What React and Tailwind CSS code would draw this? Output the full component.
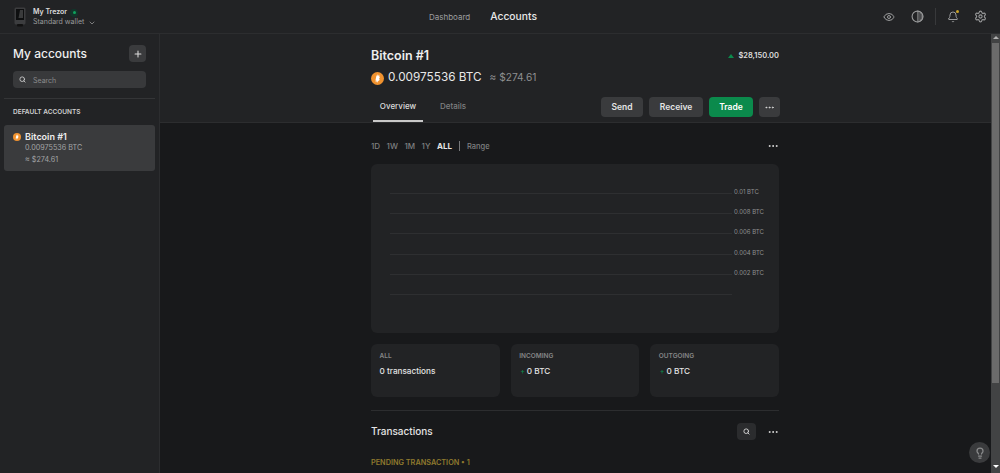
import React from 'react';
import { Search, Plus, ChevronDown, Eye, Bell, Settings, Lightbulb, MoreHorizontal } from 'lucide-react';

const font = { fontFamily: 'Inter, "Liberation Sans", sans-serif' };

const BtcIcon = ({ size = 9, className = '' }) => (
  <svg width={size} height={size} viewBox="0 0 24 24" className={`shrink-0 ${className}`}>
    <circle cx="12" cy="12" r="12" fill="#f0922f" />
    <g transform="rotate(12 12 12)">
      <path d="M9 7h4c1.700 0 2.700.9 2.700 2.300 0 1-.5 1.700-1.300 2 1.100.3 1.800 1.100 1.800 2.300 0 1.700-1.200 2.700-3.100 2.700H9z" fill="#fff" />
      <path d="M10.800 7V5 M13.300 7V5 M10.800 16.500V19 M13.300 16.500V19" stroke="#fff" strokeWidth="1.400" />
    </g>
  </svg>
);

const Sidebar = () => (
  <aside className="w-[160px] shrink-0 bg-[#222325] border-r border-[#2c2d2f]">
    <div className="flex items-center justify-between px-[13px] pt-[11px]">
      <span className="text-[12px] leading-[17px] font-medium text-[#eeeeee]">My accounts</span>
      <button className="w-[17px] h-[17px] rounded-[4px] bg-[#3a3b3d] flex items-center justify-center text-[#dddddd]">
        <Plus size={10} strokeWidth={2.5} />
      </button>
    </div>
    <div className="mx-[13px] mt-[9px] h-[17px] rounded-[4px] bg-[#38393b] flex items-center pl-[6px] gap-[7px]">
      <Search size={7} strokeWidth={3} className="text-[#cccccc]" />
      <span className="text-[7px] leading-[17px] pt-[1px] text-[#8a8b8c]">Search</span>
    </div>
    <div className="mx-1 mt-[10px] border-t border-[#343537]" />
    <div className="pl-[13px] pt-[8px] text-[6.500px] leading-[10px] font-semibold text-[#d0d0d0]">DEFAULT ACCOUNTS</div>
    <div className="mx-1 mt-[8px] h-[46px] rounded-[3px] bg-[#3a3b3d] pl-[9px] pt-[6px]">
      <div className="flex items-center gap-[4px]">
        <BtcIcon size={8} />
        <span className="text-[9px] leading-[11px] font-semibold text-[#eeeeee]">Bitcoin #1</span>
      </div>
      <div className="pl-[12px] text-[7.200px] leading-[12px] text-[#a3a4a5]">0.00975536 BTC</div>
      <div className="pl-[12px] text-[7.200px] leading-[12px] text-[#a3a4a5]">≈ $274.61</div>
    </div>
  </aside>
);

const Chart = () => (
  <div className="mt-[12px] h-[169px] rounded-[6px] bg-[#222325] pt-[19px] pl-[19px] pr-[15px]">
    {['0.01 BTC', '0.008 BTC', '0.006 BTC', '0.004 BTC', '0.002 BTC', ''].map((label, i) => (
      <div key={i} className="h-[20.300px] flex items-center">
        <div className="w-[342px] border-t border-[#2e2f31]" />
        <span className="ml-[2px] -translate-y-[2px] text-[6px] text-[#8e8f90] whitespace-nowrap">{label}</span>
      </div>
    ))}
  </div>
);

const StatCard = ({ title, value, plus }) => (
  <div className="flex-1 h-[53px] rounded-[6px] bg-[#222325] pl-[8.500px] pt-[8px]">
    <div className="text-[6.500px] leading-[9px] font-semibold text-[#858687]">{title}</div>
    <div className="mt-[4px] text-[8.200px] leading-[12px] font-medium text-[#e4e4e4]">
      {plus && <span className="text-[#0b8a4c] ml-[1px] mr-[2px] text-[7px]">+</span>}
      {value}
    </div>
  </div>
);

export default function App() {
  return (
    <div style={font} className="h-[473px] w-[1000px] overflow-hidden flex flex-col bg-[#18191b] relative">
      <header className="h-[34px] shrink-0 bg-[#222325] border-b border-[#2c2d2f] flex items-center pl-[14px] pr-[13px] relative">
        <svg width="12" height="20" viewBox="0 0 12 20" className="shrink-0">
          <rect x="0.500" y="0.500" width="11" height="17" rx="1.500" fill="#3c3d3f" />
          <rect x="2" y="2" width="8" height="11" fill="#0e0f10" />
          <path d="M6 3h3v8H4.500z" fill="#3a3b3c" />
          <rect x="3" y="17" width="6" height="2.500" rx="1" fill="#111" />
        </svg>
        <div className="ml-[7px] mt-[2px]">
          <div className="flex items-center gap-[3px] h-[10px]">
            <span className="text-[7px] font-semibold text-[#dcdcdc]">My Trezor</span>
            <span className="w-[8px] h-[8px] rounded-full bg-[#12352a] flex items-center justify-center">
              <span className="w-[3px] h-[3px] rounded-full bg-[#0fa35d]" />
            </span>
          </div>
          <div className="flex items-center gap-[4px] h-[10px]">
            <span className="text-[7px] text-[#99999a]">Standard wallet</span>
            <ChevronDown size={8} className="text-[#aaaaaa]" />
          </div>
        </div>
        <nav className="absolute left-[429px] top-0 h-[33px] flex items-center gap-[20px]">
          <span className="text-[8px] text-[#9d9e9f]">Dashboard</span>
          <span className="text-[10.300px] font-medium text-[#e8e8e8]">Accounts</span>
        </nav>
        <div className="ml-auto flex items-center text-[#9a9b9c]">
          <Eye size={12} />
          <svg width="13" height="13" viewBox="0 0 24 24" className="ml-[16px]" fill="none" stroke="currentColor" strokeWidth="2">
            <circle cx="12" cy="12" r="10" />
            <path d="M12 2a10 10 0 0 1 0 20z" fill="currentColor" opacity="0.6" />
            <path d="M15 4v16M18 7v10" stroke="#222325" strokeWidth="1.200" />
          </svg>
          <div className="ml-[11px] h-[17px] border-l border-[#38393b]" />
          <div className="relative ml-[11px]">
            <Bell size={12} />
            <span className="absolute -top-[1px] right-0 w-[3px] h-[3px] rounded-full bg-[#c9a227]" />
          </div>
          <Settings size={13} className="ml-[15px]" />
        </div>
      </header>

      <div className="flex-1 flex min-h-0">
        <Sidebar />
        <main className="flex-1 min-w-0">
          <div className="h-[89px] bg-[#222325] border-b border-[#2c2d2f]">
            <div className="w-[408px] ml-[211px] pt-[13px]">
              <div className="flex items-center justify-between h-[18px]">
                <span className="text-[12.500px] font-semibold text-[#eeeeee]">Bitcoin #1</span>
                <span className="flex items-center gap-[4px] text-[7.500px] font-semibold text-[#dddddd]">
                  <span className="w-0 h-0 border-l-[3px] border-r-[3px] border-b-[4px] border-l-transparent border-r-transparent border-b-[#0b8a4c]" />
                  $28,150.00
                </span>
              </div>
              <div className="mt-[6px] flex items-center h-[14px]">
                <BtcIcon size={13} />
                <span className="ml-[4px] text-[11.750px] text-[#e8e8e8]">0.00975536 BTC</span>
                <span className="ml-[8px] text-[10.200px] text-[#8e8f90]">≈ $274.61</span>
              </div>
              <div className="mt-[6px] flex justify-between h-[31px]">
                <div className="flex">
                  <div className="w-[50px] h-[31px] flex justify-center pt-[9px] border-b-2 border-[#c8c8c8] text-[8px] leading-[12px] font-medium text-[#dcdcdc] ml-[2px]">Overview</div>
                  <div className="ml-[17px] pt-[9px] text-[8px] leading-[12px] font-medium text-[#7f8081]">Details</div>
                </div>
                <div className="flex gap-[6px] h-[20px] mt-[6px] mr-[-1px]">
                  <button className="w-[42px] rounded-[4px] bg-[#3a3b3d] text-[8.500px] font-semibold text-[#e4e4e4]">Send</button>
                  <button className="w-[54px] rounded-[4px] bg-[#3a3b3d] text-[8.500px] font-semibold text-[#e4e4e4]">Receive</button>
                  <button className="w-[44px] rounded-[4px] bg-[#0b8a4c] text-[8.500px] font-semibold text-[#ffffff]">Trade</button>
                  <button className="w-[21px] rounded-[4px] bg-[#3a3b3d] flex items-center justify-center text-[#dddddd]">
                    <MoreHorizontal size={11} />
                  </button>
                </div>
              </div>
            </div>
          </div>

          <div className="w-[408px] ml-[211px]">
            <div className="mt-[17px] h-[12px] flex items-center text-[8px] font-medium text-[#7f8081]">
              <span>1D</span>
              <span className="ml-[6.500px]">1W</span>
              <span className="ml-[6.500px]">1M</span>
              <span className="ml-[6.500px]">1Y</span>
              <span className="ml-[6.500px] font-bold text-[#e4e4e4]">ALL</span>
              <span className="ml-[7px] h-[10px] border-l border-[#77787a]" />
              <span className="ml-[7px] pt-[1px] text-[7.500px]">Range</span>
              <MoreHorizontal size={12} className="ml-auto text-[#dddddd]" />
            </div>
            <Chart />
            <div className="mt-[11px] flex gap-[11px]">
              <StatCard title="ALL" value="0 transactions" />
              <StatCard title="INCOMING" value="0 BTC" plus />
              <StatCard title="OUTGOING" value="0 BTC" plus />
            </div>
            <div className="mt-[13px] border-t border-[#2c2d2f]" />
            <div className="mt-[12px] flex items-center h-[17px]">
              <span className="text-[10px] font-medium text-[#e4e4e4]">Transactions</span>
              <button className="ml-auto w-[19px] h-[17px] rounded-[4px] bg-[#2b2c2e] flex items-center justify-center text-[#dddddd]">
                <Search size={7} strokeWidth={3} />
              </button>
              <MoreHorizontal size={12} className="ml-[11px] text-[#dddddd]" />
            </div>
            <div className="mt-[18px] text-[7.300px] font-semibold text-[#8f7a2e]">PENDING TRANSACTION • 1</div>
          </div>
        </main>

        <div className="w-[9px] shrink-0 bg-[#424344] flex flex-col">
          <div className="mt-[2px] mx-auto w-0 h-0 border-l-[3px] border-r-[3px] border-b-[3px] border-l-transparent border-r-transparent border-b-[#b0b0b0]" />
          <div className="mt-[4px] ml-[1px] h-[340px] w-[7px] bg-[#6b6b6b]" />
          <div className="mt-auto mb-[5px] mx-auto w-0 h-0 border-l-[3px] border-r-[3px] border-t-[3px] border-l-transparent border-r-transparent border-t-[#ffffff]" />
        </div>
      </div>

      <button className="absolute right-[10px] bottom-[10px] w-[21px] h-[21px] rounded-full bg-[#3a3b3d] flex items-center justify-center text-[#8a8b8c]">
        <Lightbulb size={12} strokeWidth={2.5} />
      </button>
    </div>
  );
}
